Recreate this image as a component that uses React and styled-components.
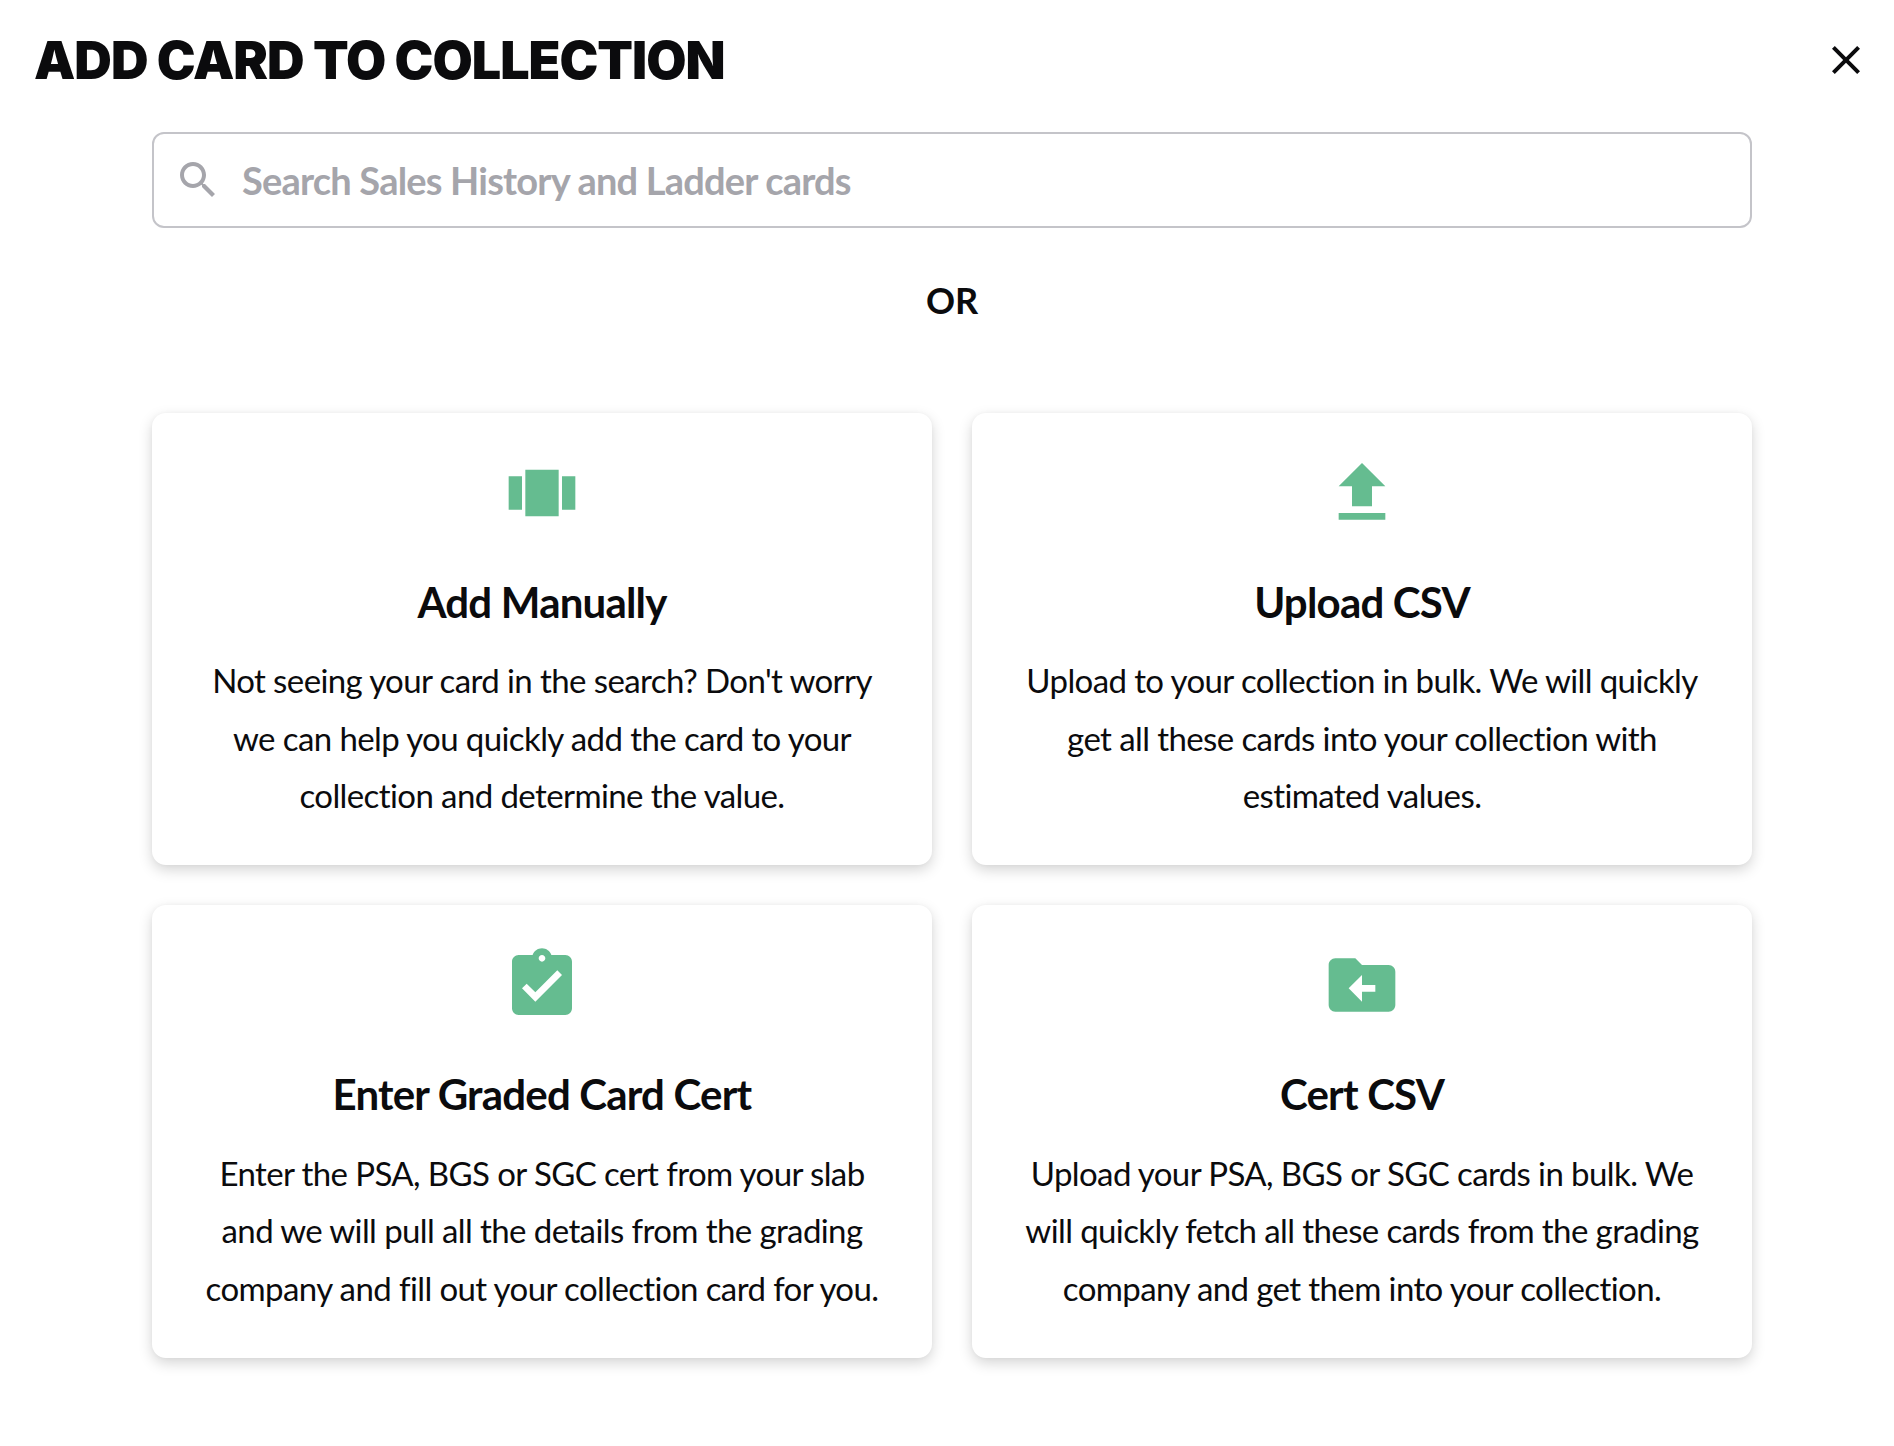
import styled, { createGlobalStyle } from "styled-components"

const GlobalStyle = createGlobalStyle`
  html, body {
    margin: 0;
    padding: 0;
    background: #fff;
    color: #0b0b0d;
    font-family: "Lato", "Liberation Sans", sans-serif;
  }
  * { box-sizing: border-box; }
`

const Modal = styled.div`
  width: 1894px;
  height: 1446px;
  overflow: hidden;
  background: #fff;
`

const Header = styled.header`
  display: flex;
  align-items: center;
  justify-content: space-between;
  height: 48px;
  margin-top: 36px;
  padding: 0 24px 0 34px;
`

const Title = styled.h1`
  margin: 0;
  padding-top: 2px;
  font-family: "Inter", sans-serif;
  font-size: 52px;
  font-weight: 900;
  letter-spacing: -1px;
  line-height: 48px;
  text-transform: uppercase;
`

const CloseButton = styled.button`
  display: flex;
  width: 48px;
  height: 48px;
  padding: 0;
  border: 0;
  background: none;
  color: #0b0b0d;
  cursor: pointer;
`

const Body = styled.main`
  display: flex;
  flex-direction: column;
  padding: 48px 142px 0 152px;
`

const SearchBar = styled.label`
  display: flex;
  align-items: center;
  gap: 20px;
  height: 96px;
  padding: 0 20px;
  border: 2px solid #c4c4c9;
  border-radius: 12px;
  color: #a5a5ab;
`

const SearchInput = styled.input`
  flex: 1;
  border: 0;
  outline: 0;
  padding: 0;
  background: none;
  font-family: "Lato", sans-serif;
  font-size: 38px;
  font-weight: 700;
  letter-spacing: -0.8px;

  &::placeholder {
    color: #a5a5ab;
    opacity: 1;
  }
`

const Divider = styled.div`
  margin-top: 48px;
  margin-bottom: 88.5px;
  text-align: center;
  font-size: 36px;
  font-weight: 700;
  line-height: 48px;
`

const CardGrid = styled.div`
  display: grid;
  grid-template-columns: 780px 780px;
  gap: 40px;
`

const Card = styled.button`
  display: flex;
  flex-direction: column;
  align-items: center;
  height: 452.5px;
  padding: 40px 0 0;
  border: 0;
  border-radius: 14px;
  background: #fff;
  box-shadow: 0 5px 14px rgba(0, 0, 0, 0.17), 0 0 4px rgba(0, 0, 0, 0.03);
  color: #0b0b0d;
  font-family: "Lato", sans-serif;
  cursor: pointer;
`

const CardIcon = styled.svg`
  width: 80px;
  height: 80px;
  fill: #65bc90;
`

const CardTitle = styled.h2`
  margin: 41px 0 0;
  font-size: 42px;
  font-weight: 700;
  letter-spacing: -0.8px;
  line-height: 56px;
`

const CardText = styled.p`
  margin: 22.5px 0 0;
  width: 700px;
  font-size: 33px;
  font-weight: 400;
  letter-spacing: -0.6px;
  line-height: 57.5px;
  text-align: center;
`

const cards = [
  {
    title: "Add Manually",
    lines: ["Not seeing your card in the search? Don't worry", "we can help you quickly add the card to your", "collection and determine the value."],
    icon: "M7 19h10V5H7v14zM2 17h4V7H2v10zM18 7v10h4V7h-4z",
  },
  {
    title: "Upload CSV",
    lines: ["Upload to your collection in bulk. We will quickly", "get all these cards into your collection with", "estimated values."],
    icon: "M9 16h6v-6h4l-7-7-7 7h4zm-4 2h14v2H5z",
  },
  {
    title: "Enter Graded Card Cert",
    lines: ["Enter the PSA, BGS or SGC cert from your slab", "and we will pull all the details from the grading", "company and fill out your collection card for you."],
    icon: "M19 3h-4.18C14.4 1.84 13.3 1 12 1c-1.3 0-2.4.84-2.82 2H5c-1.1 0-2 .9-2 2v14c0 1.1.9 2 2 2h14c1.1 0 2-.9 2-2V5c0-1.1-.9-2-2-2zm-7 0c.55 0 1 .45 1 1s-.45 1-1 1-1-.45-1-1 .45-1 1-1zm-2 14l-4-4 1.41-1.41L10 14.17l6.59-6.59L18 9l-8 8z",
  },
  {
    title: "Cert CSV",
    lines: ["Upload your PSA, BGS or SGC cards in bulk. We", "will quickly fetch all these cards from the grading", "company and get them into your collection."],
    icon: "M20 6h-8l-2-2H4c-1.1 0-2 .9-2 2v12c0 1.1.9 2 2 2h16c1.1 0 2-.9 2-2V8c0-1.1-.9-2-2-2zM8 13l4-4v3h4v2h-4v3z",
  },
]

const App = () => {
  return (
    <Modal>
      <GlobalStyle />
      <Header>
        <Title>Add Card to Collection</Title>
        <CloseButton aria-label="Close">
          <svg width="48" height="48" viewBox="0 0 24 24" fill="currentColor">
            <path d="M19 6.41L17.59 5 12 10.59 6.41 5 5 6.41 10.59 12 5 17.59 6.41 19 12 13.41 17.59 19 19 17.59 13.41 12z" />
          </svg>
        </CloseButton>
      </Header>
      <Body>
        <SearchBar>
          <svg width="48" height="48" viewBox="0 0 24 24" fill="currentColor">
            <path d="M15.5 14h-.79l-.28-.27C15.41 12.59 16 11.11 16 9.5 16 5.91 13.09 3 9.5 3S3 5.91 3 9.5 5.91 16 9.5 16c1.61 0 3.09-.59 4.23-1.57l.27.28v.79l5 4.99L20.49 19l-4.99-5zm-6 0C7.01 14 5 11.99 5 9.5S7.01 5 9.5 5 14 7.01 14 9.5 11.99 14 9.5 14z" />
          </svg>
          <SearchInput placeholder="Search Sales History and Ladder cards" />
        </SearchBar>
        <Divider>OR</Divider>
        <CardGrid>
          {cards.map((card) => (
            <Card key={card.title}>
              <CardIcon viewBox="0 0 24 24">
                <path fillRule="evenodd" d={card.icon} />
              </CardIcon>
              <CardTitle>{card.title}</CardTitle>
              <CardText>
                {card.lines.map((line) => (
                  <span key={line}>{line}<br /></span>
                ))}
              </CardText>
            </Card>
          ))}
        </CardGrid>
      </Body>
    </Modal>
  )
}

export default App
